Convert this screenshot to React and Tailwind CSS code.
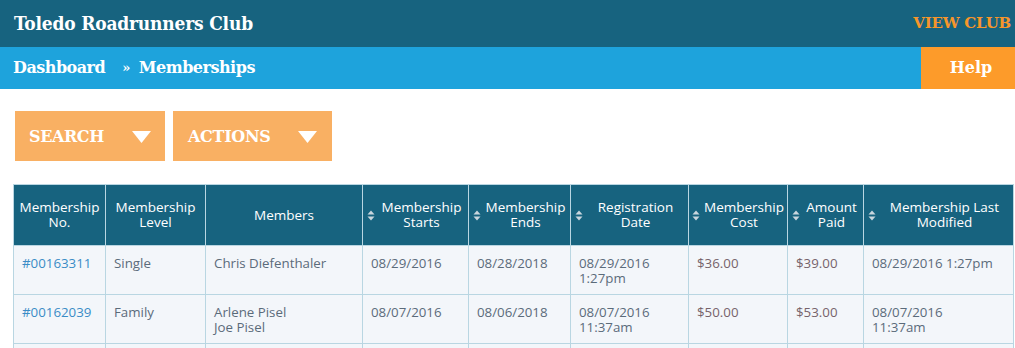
import React from 'react';

const slab = { fontFamily: '"DejaVu Serif", "Liberation Serif", serif' };

const columns = [
  { label: ['Membership', 'No.'], width: 92 },
  { label: ['Membership', 'Level'], width: 100 },
  { label: ['Members'], width: 157 },
  { label: ['Membership', 'Starts'], width: 106, sort: true },
  { label: ['Membership', 'Ends'], width: 102, sort: true },
  { label: ['Registration', 'Date'], width: 118, sort: true },
  { label: ['Membership', 'Cost'], width: 99, sort: true },
  { label: ['Amount', 'Paid'], width: 76, sort: true },
  { label: ['Membership Last', 'Modified'], width: 150, sort: true },
];

const rows = [
  {
    no: '#00163311',
    level: 'Single',
    members: ['Chris Diefenthaler'],
    starts: '08/29/2016',
    ends: '08/28/2018',
    reg: ['08/29/2016', '1:27pm'],
    cost: '$36.00',
    paid: '$39.00',
    modified: ['08/29/2016 1:27pm'],
  },
  {
    no: '#00162039',
    level: 'Family',
    members: ['Arlene Pisel', 'Joe Pisel'],
    starts: '08/07/2016',
    ends: '08/06/2018',
    reg: ['08/07/2016', '11:37am'],
    cost: '$50.00',
    paid: '$53.00',
    modified: ['08/07/2016', '11:37am'],
  },
  {
    no: '',
    level: '',
    members: [''],
    starts: '',
    ends: '',
    reg: [''],
    cost: '',
    paid: '',
    modified: [''],
  },
];

const SortIcon = () => (
  <svg width="8" height="11" viewBox="0 0 8 11" className="shrink-0">
    <path d="M4 0.5 L7.5 4.5 L0.5 4.5 Z" fill="#c9d6de" />
    <path d="M4 10.5 L7.5 6.5 L0.5 6.5 Z" fill="#c9d6de" />
  </svg>
);

const Caret = () => (
  <svg width="19" height="12" viewBox="0 0 19 12">
    <path d="M0 0 L19 0 L9.5 12 Z" fill="#ffffff" />
  </svg>
);

const Lines = ({ items }) => (
  <>
    {items.map((t, i) => (
      <div key={i}>{t}</div>
    ))}
  </>
);

export default function App() {
  return (
    <div className="w-[1015px] h-[348px] overflow-hidden bg-white">
      <div className="h-[47px] bg-[#17637f] flex items-center justify-between pl-[14px] pr-[4px]">
        <span style={slab} className="text-white text-[19px] font-bold font-stretch-condensed tracking-[-0.2px]">
          Toledo Roadrunners Club
        </span>
        <span style={slab} className="text-[#f7962a] text-[15px] font-bold tracking-[-0.2px]">
          VIEW CLUB
        </span>
      </div>

      <div className="h-[42px] bg-[#1ea3dc] flex items-stretch">
        <div style={slab} className="flex-1 flex items-center pl-[13px] text-white text-[16px] font-bold tracking-[-0.5px]">
          <span>Dashboard</span>
          <span className="ml-[17px] mr-[9px] text-[13px]">»</span>
          <span>Memberships</span>
        </div>
        <div style={slab} className="w-[94px] bg-[#fd9b2a] flex items-center justify-center pl-[6px] text-white text-[16px] font-bold">
          Help
        </div>
      </div>

      <div className="flex gap-[8px] pl-[15px] pt-[22px]">
        <button style={slab} className="w-[150px] h-[50px] bg-[#f9b063] flex items-center justify-between pl-[14px] pr-[14px] pt-[1px] text-white text-[16px] font-bold tracking-[-0.4px]">
          <span>SEARCH</span>
          <Caret />
        </button>
        <button style={slab} className="w-[159px] h-[50px] bg-[#f9b063] flex items-center justify-between pl-[15px] pr-[15px] pt-[1px] text-white text-[16px] font-bold tracking-[-0.3px]">
          <span>ACTIONS</span>
          <Caret />
        </button>
      </div>

      <div className="pl-[13px] pt-[23px]">
        <table
          className="table-fixed border-collapse w-[1000px] text-[13.5px] leading-[15px]"
          style={{ fontFamily: '"Open Sans", sans-serif' }}
        >
          <colgroup>
            {columns.map((c, i) => (
              <col key={i} style={{ width: c.width }} />
            ))}
          </colgroup>
          <thead>
            <tr className="h-[61px] bg-[#17637f] text-white">
              {columns.map((c, i) => (
                <th key={i} className="border border-[#b9d6e2] font-normal px-[4px] align-middle">
                  <div className="flex items-center justify-center gap-[4px]">
                    {c.sort && <SortIcon />}
                    <div className="flex-1 text-center">
                      <Lines items={c.label} />
                    </div>
                  </div>
                </th>
              ))}
            </tr>
          </thead>
          <tbody className="text-[#5b6b7a] text-[13.3px]">
            {rows.map((r, i) => (
              <tr key={i} className="h-[49px] bg-[#f3f6fa] align-top">
                <td className="border border-[#b9d6e2] px-[8px] pt-[10px] text-[#3a8cc6]">{r.no}</td>
                <td className="border border-[#b9d6e2] px-[8px] pt-[10px]">{r.level}</td>
                <td className="border border-[#b9d6e2] px-[8px] pt-[10px]">
                  <Lines items={r.members} />
                </td>
                <td className="border border-[#b9d6e2] px-[8px] pt-[10px]">{r.starts}</td>
                <td className="border border-[#b9d6e2] px-[8px] pt-[10px]">{r.ends}</td>
                <td className="border border-[#b9d6e2] px-[8px] pt-[10px]">
                  <Lines items={r.reg} />
                </td>
                <td className="border border-[#b9d6e2] px-[8px] pt-[10px] text-[#76636a]">{r.cost}</td>
                <td className="border border-[#b9d6e2] px-[8px] pt-[10px] text-[#76636a]">{r.paid}</td>
                <td className="border border-[#b9d6e2] px-[8px] pt-[10px]">
                  <Lines items={r.modified} />
                </td>
              </tr>
            ))}
          </tbody>
        </table>
      </div>
    </div>
  );
}
